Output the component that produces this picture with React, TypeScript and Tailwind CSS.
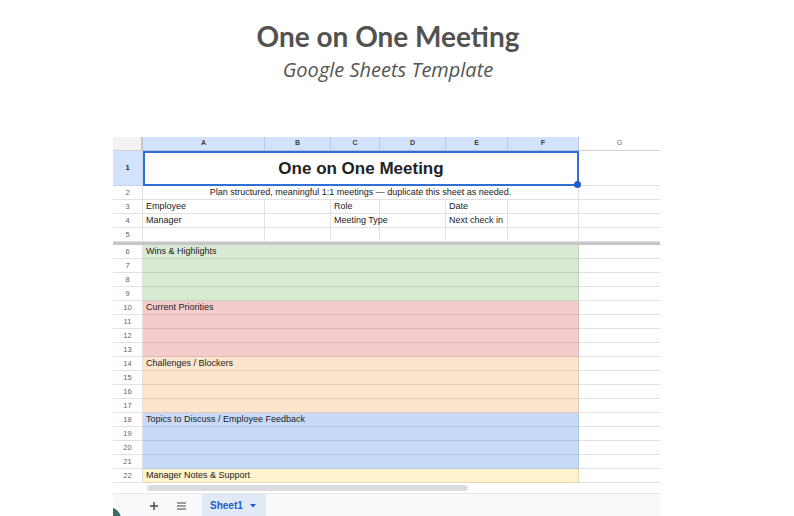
import React from "react";

const COLS = [122, 66, 49, 66, 62, 71];
const LETTERS = ["A", "B", "C", "D", "E", "F"];

const SECTIONS = [
  { label: "Wins & Highlights", bg: "bg-[#d9ead3]", rows: [6, 7, 8, 9] },
  { label: "Current Priorities", bg: "bg-[#f4cccc]", rows: [10, 11, 12, 13] },
  { label: "Challenges / Blockers", bg: "bg-[#fce5cd]", rows: [14, 15, 16, 17] },
  { label: "Topics to Discuss / Employee Feedback", bg: "bg-[#c9daf8]", rows: [18, 19, 20, 21] },
  { label: "Manager Notes & Support", bg: "bg-[#fff2cc]", rows: [22] },
];

function RowNum({ n, active }: { n: number; active?: boolean }) {
  return (
    <div
      className={
        active
          ? "w-[30px] shrink-0 flex items-center justify-center border-r border-b border-[#c7d5ee] bg-[#d3e3fd] text-[7.5px] font-bold text-[#1f1f1f]"
          : "w-[30px] shrink-0 flex items-center justify-center border-r border-b border-[#e1e1e1] bg-white text-[7.5px] text-[#5f6368]"
      }
    >
      {n}
    </div>
  );
}

function GCell() {
  return <div className="w-[81px] shrink-0 border-b border-[#e1e1e1] bg-white" />;
}

function GridRow({ n, cells }: { n: number; cells: string[] }) {
  return (
    <div className="flex h-[14px]">
      <RowNum n={n} />
      {COLS.map((w, i) => (
        <div
          key={i}
          style={{ width: w }}
          className="shrink-0 border-r border-b border-[#e1e1e1] flex items-center pl-[3px] pt-[1px] text-[9px] text-[#222] whitespace-nowrap"
        >
          {cells[i]}
        </div>
      ))}
      <GCell />
    </div>
  );
}

export default function App() {
  return (
    <div className="w-[794px] h-[516px] bg-white overflow-hidden flex flex-col">
      <div className="w-[776px] text-center pt-[21px]">
        <div className="font-['Lato',sans-serif] font-bold text-[28px] leading-[30px] text-[#525252]">
          One on One Meeting
        </div>
        <div className="mt-[7px] font-['Open_Sans',sans-serif] italic text-[20px] leading-[24px] text-[#555555]">
          Google Sheets Template
        </div>
      </div>

      <div className="ml-[113px] mt-[55px] w-[547px] font-['Liberation_Sans',Arial,sans-serif]">
        {/* Column header */}
        <div className="flex h-[14px]">
          <div className="w-[30px] shrink-0 bg-[#f3f3f3] border-r-[2px] border-b border-r-[#c4c7c5] border-b-[#d0d0d0]" />
          {COLS.map((w, i) => (
            <div
              key={i}
              style={{ width: w }}
              className="shrink-0 flex items-center justify-center bg-[#d3e3fd] border-r border-b border-r-[#b8c8e6] border-b-[#b0bfdc] text-[7px] font-bold text-[#3c4043]"
            >
              {LETTERS[i]}
            </div>
          ))}
          <div className="w-[81px] shrink-0 flex items-center justify-center bg-white border-b border-[#d0d0d0] text-[7px] text-[#6b6f73]">
            G
          </div>
        </div>

        {/* Row 1 */}
        <div className="flex h-[35px]">
          <RowNum n={1} active />
          <div className="relative w-[436px] shrink-0 border-2 border-[#2f6fd6] flex items-center justify-center text-[17px] font-bold text-[#222]">
            One on One Meeting
            <div className="absolute -right-[4px] -bottom-[4px] w-[7px] h-[7px] rounded-full bg-[#1a5fd0]" />
          </div>
          <GCell />
        </div>

        {/* Row 2 */}
        <div className="flex h-[14px]">
          <RowNum n={2} />
          <div className="w-[436px] shrink-0 border-r border-b border-[#e1e1e1] flex items-center justify-center pt-[1px] text-[9px] text-[#222] whitespace-nowrap">
            Plan structured, meaningful 1:1 meetings — duplicate this sheet as needed.
          </div>
          <GCell />
        </div>

        <GridRow n={3} cells={["Employee", "", "Role", "", "Date", ""]} />
        <GridRow n={4} cells={["Manager", "", "Meeting Type", "", "Next check in", ""]} />
        <GridRow n={5} cells={["", "", "", "", "", ""]} />

        <div className="h-[3px] bg-[#c4c7c5]" />

        {SECTIONS.map((s) =>
          s.rows.map((r, idx) => (
            <div key={r} className="flex h-[14px]">
              <RowNum n={r} />
              <div
                className={`w-[436px] shrink-0 ${s.bg} border-r border-b border-black/10 flex items-center pl-[3px] pt-[1px] text-[9px] text-[#222] whitespace-nowrap`}
              >
                {idx === 0 ? s.label : ""}
              </div>
              <GCell />
            </div>
          ))
        )}

        {/* horizontal scrollbar */}
        <div className="flex h-[10px] items-center pl-[34px] bg-white">
          <div className="w-[321px] h-[6px] rounded-full bg-[#dadce0]" />
        </div>

        {/* bottom tab bar */}
        <div className="flex h-[24px] bg-[#f8f9fa] border-t border-[#e6e8eb]">
          <div className="w-[30px] shrink-0 flex items-end">
            <svg width="9" height="11" viewBox="0 0 9 11">
              <path d="M0 2 Q6 4 8 11 L0 11 Z" fill="#3d6b67" />
            </svg>
          </div>
          <div className="w-[22px] shrink-0 flex items-center justify-center">
            <svg width="10" height="10" viewBox="0 0 10 10">
              <path d="M5 1 V9 M1 5 H9" stroke="#444746" strokeWidth="1.4" />
            </svg>
          </div>
          <div className="w-[32px] shrink-0 flex items-center justify-center">
            <svg width="11" height="10" viewBox="0 0 11 10">
              <path d="M1 2 H10 M1 5 H10 M1 8 H10" stroke="#444746" strokeWidth="1.2" />
            </svg>
          </div>
          <div className="ml-[5px] w-[64px] shrink-0 bg-[#e1e9f7] flex items-center pl-[8px] gap-[7px]">
            <span className="text-[10px] font-bold text-[#1f5bc4]">Sheet1</span>
            <svg width="6" height="4" viewBox="0 0 6 4">
              <path d="M0 0 H6 L3 3.5 Z" fill="#1f5bc4" />
            </svg>
          </div>
        </div>
      </div>
    </div>
  );
}
